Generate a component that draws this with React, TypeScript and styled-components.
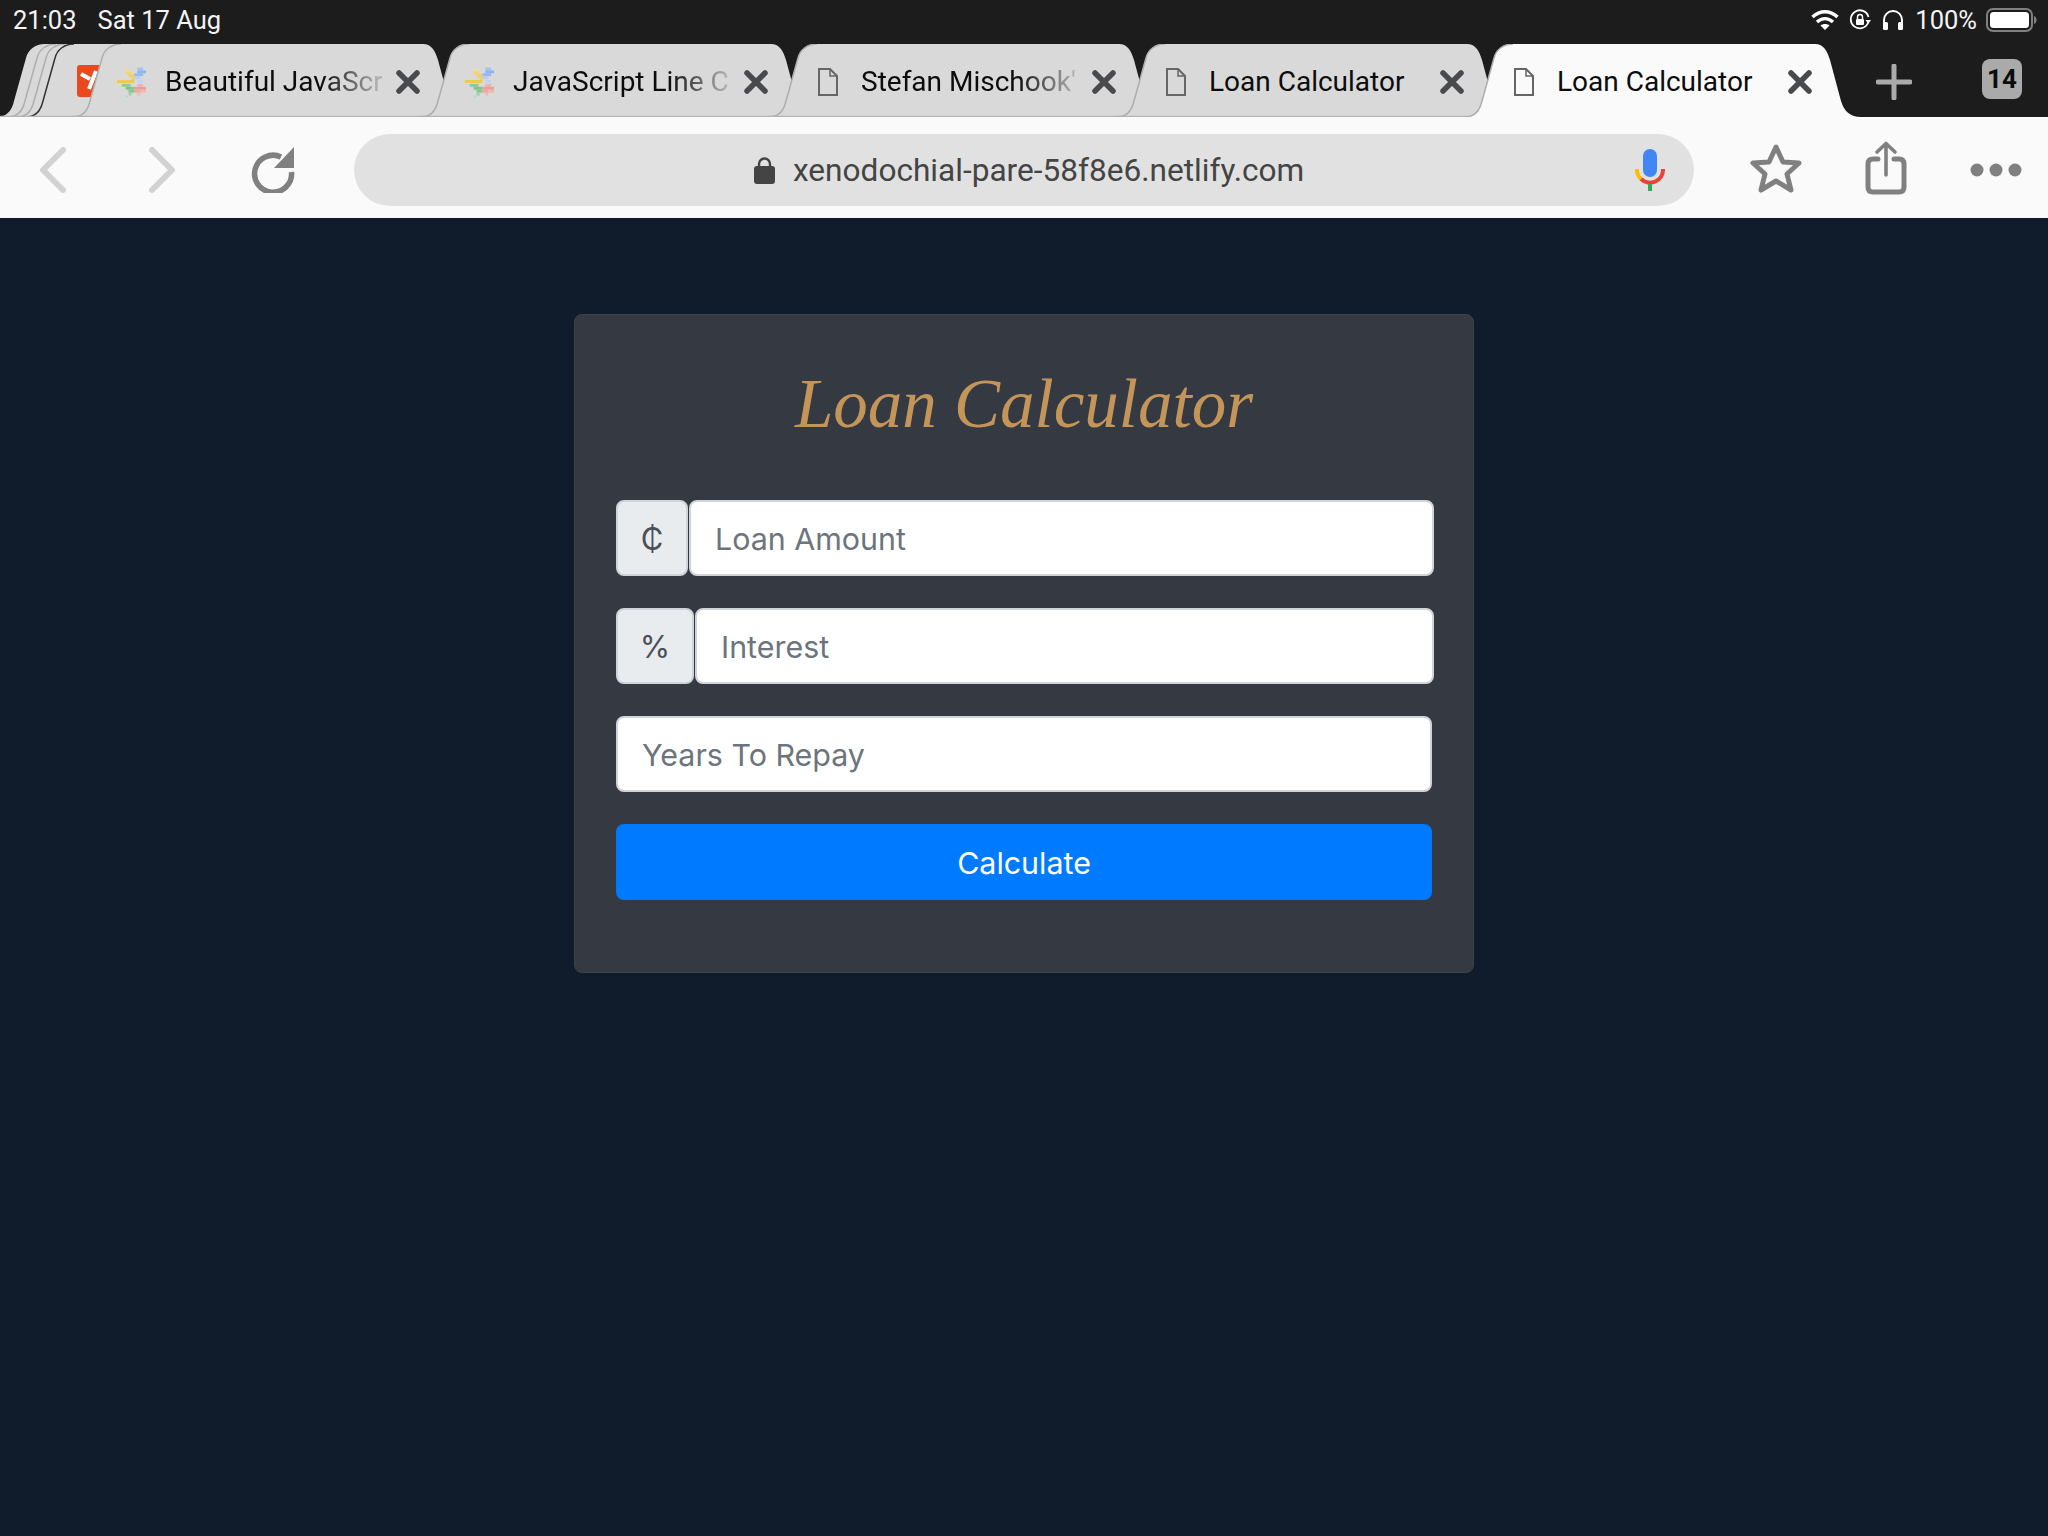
import styled, { createGlobalStyle } from "styled-components";

const GlobalStyle = createGlobalStyle`
  html, body {
    margin: 0;
    padding: 0;
    height: 100%;
    background: #101c2c;
  }
  * {
    box-sizing: border-box;
  }
`;

const Screen = styled.div`
  width: 2048px;
  height: 1536px;
  overflow: hidden;
  background: #101c2c;
  font-family: Inter, "Liberation Sans", sans-serif;
`;

const StatusBar = styled.div`
  height: 44px;
  padding: 0 11px 4px 13px;
  display: flex;
  align-items: center;
  background: #1c1c1c;
  color: #f4f4f4;
  font-family: Roboto, "Liberation Sans", sans-serif;
  font-size: 25.5px;
`;

const StatusDate = styled.span`
  margin-left: 21px;
`;

const StatusRight = styled.div`
  margin-left: auto;
  display: flex;
  align-items: center;
`;

const StatusIcon = styled.svg<{ $gap?: number }>`
  display: block;
  margin-left: ${({ $gap }) => $gap ?? 0}px;
`;

const Percent = styled.span`
  margin-left: 11px;
  margin-right: 9px;
`;

const TabStrip = styled.div`
  height: 73px;
  display: flex;
  background: #1c1c1c;
`;

const TabStack = styled.svg`
  display: block;
  flex-shrink: 0;
  width: 130px;
  height: 73px;
  margin-right: -57px;
`;

const TabItem = styled.div`
  position: relative;
  isolation: isolate;
  flex-shrink: 0;
  width: 348px;
  height: 73px;
  padding: 3px 0 0 44px;
  display: flex;
  align-items: center;
  color: #0c0c0c;
  font-family: Roboto, "Liberation Sans", sans-serif;
  font-size: 28px;
`;

const TabShape = styled.svg`
  position: absolute;
  left: 0;
  top: 0;
  z-index: -1;
  width: 396px;
  height: 73px;
`;

const TabIconBox = styled.span`
  width: 29px;
  height: 32px;
  margin-right: 19px;
  flex-shrink: 0;
  display: flex;
  align-items: center;
  justify-content: center;
`;

const TabTitle = styled.span<{ $fade: boolean }>`
  width: 217px;
  margin-top: -1px;
  flex-shrink: 0;
  white-space: nowrap;
  ${({ $fade }) =>
    $fade
      ? "mask-image: linear-gradient(to right, #000 72%, rgba(0, 0, 0, 0.2) 98%);"
      : ""}
`;

const TabClose = styled.svg`
  display: block;
  flex-shrink: 0;
  margin-left: 14px;
`;

const NewTab = styled.svg`
  display: block;
  flex-shrink: 0;
  margin-left: 63px;
  margin-top: 20px;
`;

const TabCount = styled.div`
  width: 40px;
  height: 40px;
  margin: 15px 0 0 70px;
  flex-shrink: 0;
  display: flex;
  align-items: center;
  justify-content: center;
  border-radius: 8px;
  background: #aaaaaa;
  color: #0c0c0c;
  font-family: Roboto, "Liberation Sans", sans-serif;
  font-size: 26px;
  font-weight: 700;
`;

const Toolbar = styled.div`
  height: 101px;
  padding: 5px 0 0 40px;
  display: flex;
  align-items: center;
  background: #fafafa;
`;

const ToolIcon = styled.svg<{ $gap?: number; $lift?: number }>`
  display: block;
  flex-shrink: 0;
  margin-left: ${({ $gap }) => $gap ?? 0}px;
  margin-bottom: ${({ $lift }) => $lift ?? 0}px;
`;

const AddressPill = styled.div`
  width: 1340px;
  height: 72px;
  margin-left: 59px;
  flex-shrink: 0;
  padding: 0 29px 0 400px;
  display: flex;
  align-items: center;
  border-radius: 36px;
  background: #e1e1e1;
`;

const LockIcon = styled.svg`
  display: block;
  flex-shrink: 0;
`;

const AddressText = styled.span`
  margin-left: 18px;
  color: #444444;
  font-family: Roboto, "Liberation Sans", sans-serif;
  font-size: 31.6px;
  white-space: nowrap;
`;

const MicIcon = styled.svg`
  display: block;
  margin-left: auto;
  flex-shrink: 0;
`;

const Card = styled.form`
  width: 900px;
  height: 659px;
  margin: 96px auto 0;
  padding: 41px;
  display: flex;
  flex-direction: column;
  border: 1px solid #3d4249;
  border-radius: 8px;
  background: #353a42;
`;

const Heading = styled.h1`
  height: 88px;
  margin: 4px 0 52px;
  color: #c49558;
  font-family: "Liberation Serif", serif;
  font-size: 69px;
  font-style: italic;
  font-weight: 400;
  line-height: 88px;
  text-align: center;
`;

const FieldRow = styled.div<{ $short?: boolean }>`
  height: 76px;
  margin: 0 ${({ $short }) => ($short ? "0" : "-2px")} 32px 0;
  display: flex;
  gap: 1px;
`;

const Addon = styled.span<{ $width: number }>`
  width: ${({ $width }) => $width}px;
  flex-shrink: 0;
  display: flex;
  align-items: center;
  justify-content: center;
  border: 2px solid #ced4da;
  border-radius: 8px;
  background: #e9ecef;
  color: #495057;
  font-size: 31px;
`;

const Field = styled.input`
  flex: 1;
  min-width: 0;
  padding: 2px 24px 0;
  border: 2px solid #ced4da;
  border-radius: 8px;
  background: #ffffff;
  color: #495057;
  font-family: Inter, "Liberation Sans", sans-serif;
  font-size: 30.4px;

  &::placeholder {
    color: #6c757d;
    opacity: 1;
  }
`;

const SubmitButton = styled.button`
  height: 76px;
  padding-top: 2px;
  border: 0;
  border-radius: 8px;
  background: #007bff;
  color: #ffffff;
  font-family: Inter, "Liberation Sans", sans-serif;
  font-size: 30.4px;
`;

const edge = (x: number) =>
  `M${x},73 C${x + 10},73 ${x + 15},66 ${x + 17},57 L${x + 29},14 C${x + 31},6 ${x + 38},0 ${x + 48},0`;

const TAB_PATH = `${edge(0)} L350,0 C358,0 362,6 365,16 L376,57 C379,67 385,73 396,73 Z`;

// low-res favicon, drawn on its 3px pixel grid
const SPARKLE: [number, number, number, number, string][] = [
  [9, 2, 3, 3, "#f6dc8c"],
  [9, 5, 6, 3, "#f4d572"],
  [12, 8, 6, 3, "#f2cf5e"],
  [15, 11, 3, 3, "#f2cf5e"],
  [0, 14, 18, 3, "#f2c94c"],
  [21, 1, 6, 3, "#a6c3f3"],
  [21, 4, 9, 3, "#8fb4f0"],
  [18, 7, 9, 3, "#94b8f1"],
  [18, 10, 6, 3, "#b6cdf4"],
  [21, 14, 6, 3, "#bed3f6"],
  [5, 18, 9, 3, "#8ecb97"],
  [9, 21, 9, 3, "#82c48c"],
  [12, 24, 6, 3, "#85c78f"],
  [12, 27, 3, 3, "#9ad2a2"],
  [9, 30, 3, 2, "#b5dfba"],
  [21, 18, 6, 3, "#eeb1ab"],
  [18, 21, 12, 3, "#e99f98"],
  [18, 24, 6, 3, "#eca8a2"],
  [24, 24, 6, 3, "#f0b8b2"],
  [21, 27, 3, 3, "#f0b8b2"],
];

function Sparkle() {
  return (
    <svg width="30" height="32" viewBox="0 0 30 32" aria-hidden>
      {SPARKLE.map(([x, y, w, h, c]) => (
        <rect key={`${x}-${y}`} x={x} y={y} width={w} height={h} fill={c} />
      ))}
    </svg>
  );
}

function DocIcon() {
  return (
    <svg width="20" height="28" viewBox="0 0 20 28" fill="none" stroke="#666666" strokeWidth="2" aria-hidden>
      <path d="M1,1 H12 L19,8 V27 H1 Z" />
      <path d="M12,1 V8 H19" strokeWidth="1.5" />
    </svg>
  );
}

const TABS = [
  { title: "Beautiful JavaScr", icon: "sparkle", fade: true },
  { title: "JavaScript Line C", icon: "sparkle", fade: true },
  { title: "Stefan Mischook'", icon: "doc", fade: true },
  { title: "Loan Calculator", icon: "doc", fade: false },
  { title: "Loan Calculator", icon: "doc", fade: false, active: true },
];

function Tab({ title, icon, fade, active }: { title: string; icon: string; fade: boolean; active?: boolean }) {
  return (
    <TabItem>
      <TabShape viewBox="0 0 396 73" fill="none" aria-hidden>
        <path d={TAB_PATH} fill={active ? "#fafafa" : "#d9d9d9"} />
        <path d={edge(0)} stroke="#aeaeae" strokeWidth="1.5" />
        {!active && <path d="M0,72.5 H396" stroke="#b4b4b4" strokeWidth="1.5" />}
      </TabShape>
      <TabIconBox>{icon === "sparkle" ? <Sparkle /> : <DocIcon />}</TabIconBox>
      <TabTitle $fade={fade}>{title}</TabTitle>
      <TabClose width="24" height="24" viewBox="0 0 24 24" aria-hidden>
        <path d="M3,3 L21,21 M21,3 L3,21" stroke="#484a4d" strokeWidth="5.5" strokeLinecap="round" />
      </TabClose>
    </TabItem>
  );
}

export default function App() {
  return (
    <Screen>
      <GlobalStyle />
      <StatusBar>
        <span>21:03</span>
        <StatusDate>Sat 17 Aug</StatusDate>
        <StatusRight>
          {/* wifi */}
          <StatusIcon width="28" height="20" viewBox="0 0 28 20" fill="none" stroke="#ffffff" strokeWidth="3.4">
            <path d="M1.5,7 C9,0 19,0 26.5,7" />
            <path d="M6,12 C11,7.5 17,7.5 22,12" />
            <path d="M14,20 L9.5,15.5 C12,13.5 16,13.5 18.5,15.5 Z" fill="#ffffff" stroke="none" />
          </StatusIcon>
          {/* rotation lock */}
          <StatusIcon $gap={10} width="22" height="22" viewBox="0 0 22 22" fill="none" stroke="#ffffff" strokeWidth="1.8">
            <path d="M19,14 A9,9 0 1 1 19.5,8" />
            <path d="M16.5,11 L22,11 L19.2,15 Z" fill="#ffffff" stroke="none" />
            <rect x="7" y="10" width="8" height="6" rx="1" fill="#ffffff" stroke="none" />
            <path d="M8.5,10 V8 A2.5,2.5 0 0 1 13.5,8 V10" strokeWidth="1.4" />
          </StatusIcon>
          {/* headphones */}
          <StatusIcon $gap={11} width="22" height="22" viewBox="0 0 22 22" fill="none" stroke="#ffffff" strokeWidth="2">
            <path d="M2,16 V11 A9,9 0 0 1 20,11 V16" />
            <rect x="1" y="13" width="5" height="8" rx="1.5" fill="#ffffff" stroke="none" />
            <rect x="16" y="13" width="5" height="8" rx="1.5" fill="#ffffff" stroke="none" />
          </StatusIcon>
          <Percent>100%</Percent>
          <StatusIcon width="51" height="24" viewBox="0 0 51 24">
            <rect x="1" y="1" width="45" height="22" rx="6" fill="none" stroke="#808080" strokeWidth="2" />
            <rect x="4" y="4" width="39" height="16" rx="3.5" fill="#ffffff" />
            <path d="M48,8 C50,9 50.5,10 50.5,12 C50.5,14 50,15 48,16 Z" fill="#808080" />
          </StatusIcon>
        </StatusRight>
      </StatusBar>

      <TabStrip>
        <TabStack viewBox="0 0 130 73" fill="none" aria-hidden>
          <path d={`${edge(-3)} H130 V73 Z`} fill="#d9d9d9" />
          <path d={edge(8)} stroke="#aeaeae" strokeWidth="1.5" />
          <path d={edge(17)} stroke="#aeaeae" strokeWidth="1.5" />
          <path d={edge(26)} stroke="#333333" strokeWidth="1.5" />
          <path d="M0,72.5 H130" stroke="#b4b4b4" strokeWidth="1.5" />
          <path d="M80,21 H110 V53 H80 Q77,53 77,50 V24 Q77,21 80,21 Z" fill="#e8491d" />
          <path d="M81,30 L90,35 M96,27 L89,45" stroke="#ffffff" strokeWidth="4" />
        </TabStack>
        {TABS.map((tab, i) => (
          <Tab key={i} {...tab} />
        ))}
        <NewTab width="36" height="36" viewBox="0 0 36 36" aria-hidden>
          <path d="M18,2 V34 M2,18 H34" stroke="#aaaaaa" strokeWidth="5" strokeLinecap="round" />
        </NewTab>
        <TabCount>14</TabCount>
      </TabStrip>

      <Toolbar>
        <ToolIcon width="26" height="46" viewBox="0 0 26 46" fill="none" stroke="#d2d2d2" strokeWidth="6" strokeLinecap="round" strokeLinejoin="round">
          <path d="M23,3 L3,23 L23,43" />
        </ToolIcon>
        <ToolIcon $gap={83} width="26" height="46" viewBox="0 0 26 46" fill="none" stroke="#d2d2d2" strokeWidth="6" strokeLinecap="round" strokeLinejoin="round">
          <path d="M3,3 L23,23 L3,43" />
        </ToolIcon>
        <ToolIcon $gap={75} width="45" height="46" viewBox="0 0 45 46" fill="none" stroke="#808080" strokeWidth="5.5">
          <path d="M41.5,25 A18.5,18.5 0 1 1 31,10" />
          <path d="M44,0 V21 H24 Z" fill="#808080" stroke="none" />
        </ToolIcon>
        <AddressPill>
          <LockIcon width="21" height="27" viewBox="0 0 21 27" aria-hidden>
            <rect x="0" y="9" width="21" height="18" rx="3" fill="#444444" />
            <path d="M5,10 V7 A5.5,5.5 0 0 1 16,7 V10" fill="none" stroke="#444444" strokeWidth="2.4" />
          </LockIcon>
          <AddressText>xenodochial-pare-58f8e6.netlify.com</AddressText>
          <MicIcon width="30" height="42" viewBox="0 0 30 42" fill="none" aria-hidden>
            <rect x="8" y="0" width="14" height="28" rx="7" fill="#4285f4" />
            <path d="M2,20 A13,13 0 0 0 6,30" stroke="#fbbc05" strokeWidth="4" />
            <path d="M6,30 A13,13 0 0 0 28,20" stroke="#ea4335" strokeWidth="4" />
            <rect x="13" y="35" width="4" height="7" fill="#34a853" />
          </MicIcon>
        </AddressPill>
        <ToolIcon $gap={55} $lift={4} width="54" height="52" viewBox="0 0 54 52" fill="none" stroke="#808080" strokeWidth="5" strokeLinejoin="round">
          <path d="M27,5 L34,20 L50,21 L38,32 L42,48 L27,39 L12,48 L16,32 L4,21 L20,20 Z" />
        </ToolIcon>
        <ToolIcon $gap={62} $lift={5} width="42" height="54" viewBox="0 0 42 54" fill="none" stroke="#808080" strokeWidth="5" strokeLinecap="round" strokeLinejoin="round">
          <path d="M13,18 H8 Q3,18 3,23 V46 Q3,51 8,51 H34 Q39,51 39,46 V23 Q39,18 34,18 H29" />
          <path d="M21,34 V3 M12,11 L21,2.5 L30,11" strokeWidth="3.6" />
        </ToolIcon>
        <ToolIcon $gap={63} width="52" height="14" viewBox="0 0 52 14" fill="#808080">
          <circle cx="7" cy="7" r="6.5" />
          <circle cx="26" cy="7" r="6.5" />
          <circle cx="45" cy="7" r="6.5" />
        </ToolIcon>
      </Toolbar>

      <Card>
        <Heading>Loan Calculator</Heading>
        <FieldRow>
          <Addon $width={72}>₵</Addon>
          <Field placeholder="Loan Amount" />
        </FieldRow>
        <FieldRow>
          <Addon $width={78}>%</Addon>
          <Field placeholder="Interest" />
        </FieldRow>
        <FieldRow $short>
          <Field placeholder="Years To Repay" />
        </FieldRow>
        <SubmitButton type="button">Calculate</SubmitButton>
      </Card>
    </Screen>
  );
}
